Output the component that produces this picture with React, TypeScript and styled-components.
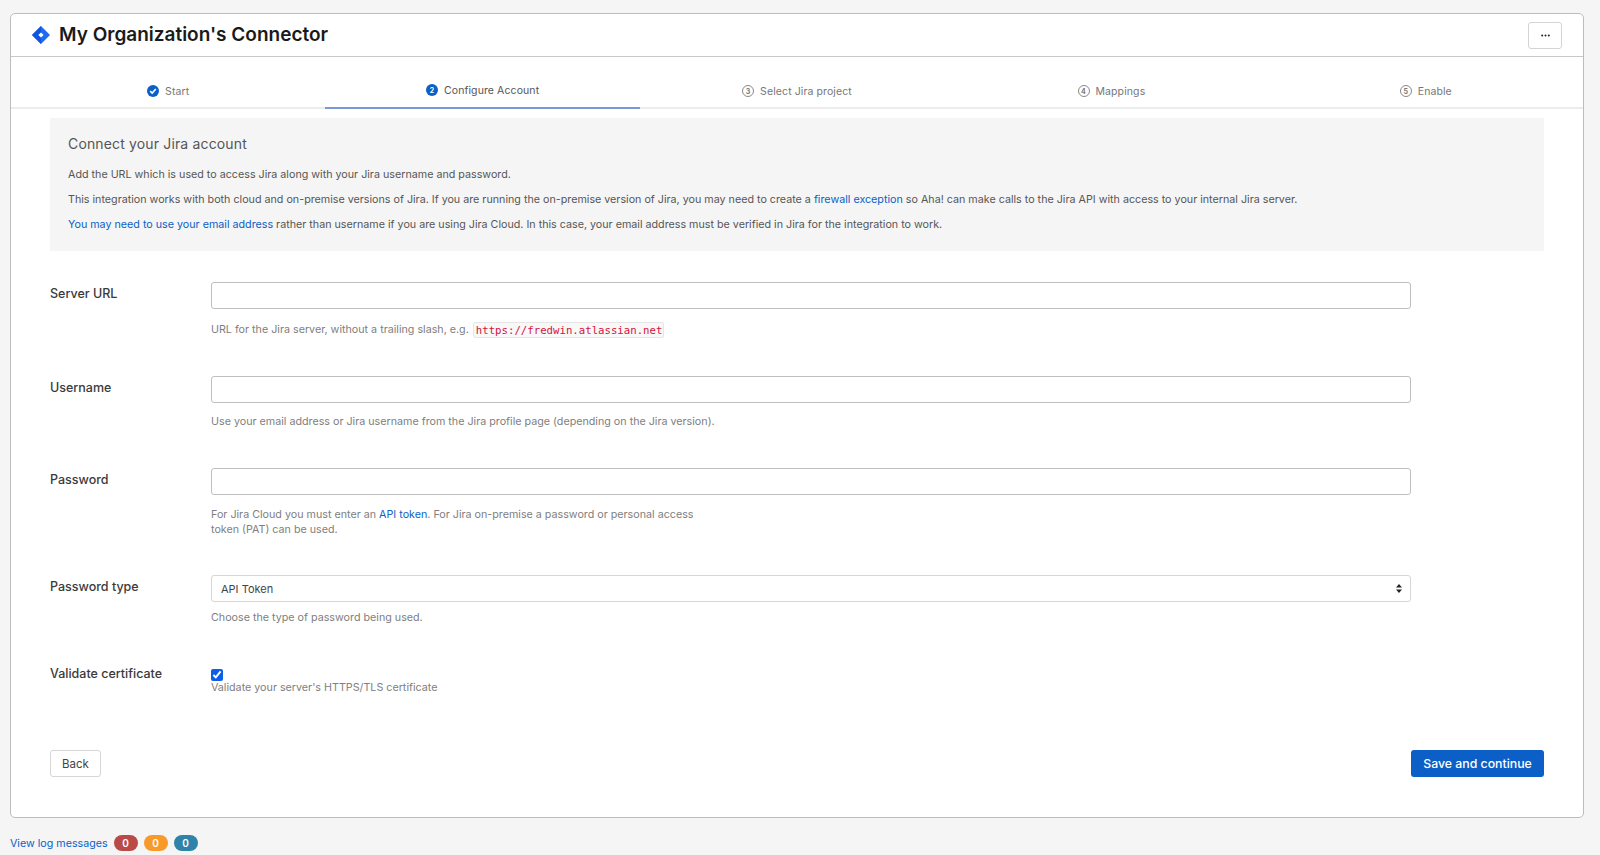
import React from 'react';
import styled, { createGlobalStyle } from 'styled-components';

const Global = createGlobalStyle`
  html, body { margin: 0; padding: 0; height: 855px; overflow: hidden; background: #f5f5f5; }
  body { font-family: Inter, "Liberation Sans", sans-serif; font-size: 11px; color: #555; }
  * { box-sizing: border-box; }
`;

const Page = styled.div`
  height: 855px;
  padding: 13px 16px 0 10px;
  display: flex;
  flex-direction: column;
`;
const Card = styled.main`
  height: 805px;
  background: #fff;
  border: 1px solid #bdbdbd;
  border-radius: 5px;
  display: flex;
  flex-direction: column;
`;
const Header = styled.header`
  height: 43px;
  flex: none;
  border-bottom: 1px solid #c8c8c8;
  padding: 0 21px 0 20px;
  display: flex;
  align-items: center;
  gap: 8px;
`;
const Title = styled.h1`
  margin: 0;
  padding-bottom: 2px;
  flex: 1;
  font-size: 19px;
  font-weight: 600;
  color: #1a1a1a;
  line-height: 1;
`;
const MoreButton = styled.button`
  width: 34px;
  height: 27px;
  background: #fff;
  border: 1px solid #d4d4d4;
  border-radius: 3px;
  padding: 0;
  display: flex;
  align-items: center;
  justify-content: center;
  color: #222;
`;
const Tabs = styled.nav`
  height: 52px;
  flex: none;
  display: grid;
  grid-template-columns: repeat(5, 1fr);
  border-bottom: 2px solid #ececec;
`;
const Tab = styled.div<{ $active?: boolean }>`
  height: 52px;
  padding-top: ${(p) => (p.$active ? 16 : 18)}px;
  display: flex;
  align-items: center;
  justify-content: center;
  gap: 6px;
  font-size: 10.5px;
  letter-spacing: 0.1px;
  color: ${(p) => (p.$active ? '#555' : '#777')};
  border-bottom: 2px solid ${(p) => (p.$active ? '#7b98d6' : 'transparent')};
`;
const StepDot = styled.span<{ $filled?: boolean }>`
  width: 12px;
  height: 12px;
  flex: none;
  border-radius: 50%;
  display: flex;
  align-items: center;
  justify-content: center;
  font-size: 7px;
  font-weight: 700;
  line-height: 1;
  color: ${(p) => (p.$filled ? '#fff' : '#777')};
  background: ${(p) => (p.$filled ? '#0b5fc6' : 'transparent')};
  border: ${(p) => (p.$filled ? 'none' : '1px solid #888')};
`;
const Body = styled.div`
  flex: 1;
  padding: 9px 39px 40px;
  display: flex;
  flex-direction: column;
`;
const InfoPanel = styled.section`
  height: 133px;
  flex: none;
  background: #f5f5f5;
  padding: 17px 18px 0;
  margin-bottom: 31px;
`;
const InfoTitle = styled.h2`
  margin: 0 0 9px;
  font-size: 14px;
  font-weight: 400;
  line-height: 18px;
  letter-spacing: 0.15px;
  color: #555;
`;
const InfoText = styled.p`
  margin: 0;
  height: 25px;
  line-height: 25px;
  font-size: 10.73px;
  color: #555;
  white-space: nowrap;
`;
const Link = styled.a`
  color: #0b5fc6;
  text-decoration: none;
`;
const Row = styled.div<{ $pitch: number }>`
  height: ${(p) => p.$pitch}px;
  flex: none;
  display: grid;
  grid-template-columns: 161px 1200px;
  align-content: start;
`;
const Label = styled.label`
  font-size: 12.5px;
  font-weight: 500;
  color: #3a3a3a;
  line-height: 24px;
`;
const Field = styled.div`
  display: flex;
  flex-direction: column;
  align-items: flex-start;
  position: relative;
`;
const TextInput = styled.input`
  width: 100%;
  height: 27px;
  border: 1px solid #bfbfbf;
  border-radius: 3px;
  background: #fff;
  outline: none;
`;
const SelectBox = styled.select`
  width: 100%;
  height: 27px;
  border: 1px solid #d6d6d6;
  border-radius: 3px;
  background: #fff;
  appearance: none;
  padding: 0 9px;
  font-family: inherit;
  font-size: 11px;
  color: #444;
`;
const SelectArrows = styled.svg`
  position: absolute;
  top: 9px;
  right: 9px;
  width: 6px;
  height: 9px;
  fill: #222;
`;
const Hint = styled.div<{ $top: number }>`
  margin-top: ${(p) => p.$top}px;
  max-width: 490px;
  font-size: 10.73px;
  line-height: 14.5px;
  color: #808080;
  white-space: pre-line;
`;
const WideHint = styled(Hint)`
  max-width: none;
  white-space: nowrap;
`;
const Code = styled.code`
  display: inline-block;
  height: 16px;
  line-height: 15px;
  padding: 0 1px 0 2px;
  margin-left: 1px;
  font-family: "DejaVu Sans Mono", "Liberation Mono", monospace;
  font-size: 10.7px;
  color: #d4143c;
  background: #f8f8f8;
  border: 1px solid #e6e6e6;
  border-radius: 2px;
  vertical-align: middle;
`;
const Check = styled.input`
  width: 12px;
  height: 12px;
  margin: 7px 0 0;
  accent-color: #0d5ee8;
`;
const Actions = styled.div`
  margin-top: auto;
  display: flex;
  justify-content: space-between;
`;
const BackButton = styled.button`
  width: 51px;
  height: 27px;
  background: #fff;
  border: 1px solid #d6d6d6;
  border-radius: 3px;
  font-family: inherit;
  font-size: 11.5px;
  color: #444;
`;
const SaveButton = styled.button`
  width: 133px;
  height: 27px;
  background: #0b5fc6;
  border: none;
  border-radius: 3px;
  font-family: inherit;
  font-size: 12.3px;
  font-weight: 500;
  color: #fff;
`;
const Footer = styled.footer`
  margin-top: 17px;
  display: flex;
  align-items: center;
  height: 16px;
`;
const LogLink = styled(Link)`
  font-size: 10.7px;
  margin-right: 6px;
`;
const Badge = styled.span<{ $color: string }>`
  width: 24px;
  height: 16px;
  margin-right: 6px;
  border-radius: 8px;
  background: ${(p) => p.$color};
  color: #fff;
  font-size: 10px;
  font-weight: 600;
  display: flex;
  align-items: center;
  justify-content: center;
`;

const JiraLogo = () => (
  <svg width="20" height="20" viewBox="0 0 20 20" aria-hidden="true">
    <path d="M10 1 19 10 10 19 1 10Z" fill="#1f6bf0" />
    <path d="M1 10 10 1 10 7 7 10 10 13 10 19Z" fill="#0f55e0" />
    <path d="M10 7.4 12.6 10 10 12.6 7.4 10Z" fill="#fff" />
  </svg>
);
const Dots = () => (
  <svg width="9" height="3" viewBox="0 0 9 3" fill="currentColor" aria-hidden="true">
    <circle cx="1.2" cy="1.5" r="1" />
    <circle cx="4.5" cy="1.5" r="1" />
    <circle cx="7.8" cy="1.5" r="1" />
  </svg>
);
const CheckMark = () => (
  <svg width="8" height="8" viewBox="0 0 8 8" fill="none" stroke="#fff" strokeWidth="1.6" aria-hidden="true">
    <path d="M1.2 4.2 3.2 6 6.8 2" />
  </svg>
);

export default function App() {
  return (
    <Page>
      <Global />
      <Card>
        <Header>
          <JiraLogo />
          <Title>My Organization's Connector</Title>
          <MoreButton aria-label="More"><Dots /></MoreButton>
        </Header>
        <Tabs>
          <Tab><StepDot $filled><CheckMark /></StepDot>Start</Tab>
          <Tab $active><StepDot $filled>2</StepDot>Configure Account</Tab>
          <Tab><StepDot>3</StepDot>Select Jira project</Tab>
          <Tab><StepDot>4</StepDot>Mappings</Tab>
          <Tab><StepDot>5</StepDot>Enable</Tab>
        </Tabs>
        <Body>
          <InfoPanel>
            <InfoTitle>Connect your Jira account</InfoTitle>
            <InfoText>Add the URL which is used to access Jira along with your Jira username and password.</InfoText>
            <InfoText>
              This integration works with both cloud and on-premise versions of Jira. If you are running the on-premise version of Jira, you may need to create a <Link href="#">firewall exception</Link> so Aha! can make calls to the Jira API with access to your internal Jira server.
            </InfoText>
            <InfoText>
              <Link href="#">You may need to use your email address</Link> rather than username if you are using Jira Cloud. In this case, your email address must be verified in Jira for the integration to work.
            </InfoText>
          </InfoPanel>
          <Row $pitch={94}>
            <Label>Server URL</Label>
            <Field>
              <TextInput type="text" />
              <WideHint $top={13}>URL for the Jira server, without a trailing slash, e.g. <Code>https://fredwin.atlassian.net</Code></WideHint>
            </Field>
          </Row>
          <Row $pitch={92}>
            <Label>Username</Label>
            <Field>
              <TextInput type="text" />
              <WideHint $top={12}>Use your email address or Jira username from the Jira profile page (depending on the Jira version).</WideHint>
            </Field>
          </Row>
          <Row $pitch={107}>
            <Label>Password</Label>
            <Field>
              <TextInput type="password" />
              <Hint $top={13}>For Jira Cloud you must enter an <Link href="#">API token</Link>. For Jira on-premise a password or personal access token (PAT) can be used.</Hint>
            </Field>
          </Row>
          <Row $pitch={87}>
            <Label>Password type</Label>
            <Field>
              <SelectBox defaultValue="API Token">
                <option>API Token</option>
              </SelectBox>
              <SelectArrows viewBox="0 0 6 9" aria-hidden="true">
                <path d="M3 0 6 3.5H0ZM3 9 0 5.5H6Z" />
              </SelectArrows>
              <WideHint $top={9}>Choose the type of password being used.</WideHint>
            </Field>
          </Row>
          <Row $pitch={60}>
            <Label>Validate certificate</Label>
            <Field>
              <Check type="checkbox" defaultChecked />
              <WideHint $top={0}>Validate your server's HTTPS/TLS certificate</WideHint>
            </Field>
          </Row>
          <Actions>
            <BackButton>Back</BackButton>
            <SaveButton>Save and continue</SaveButton>
          </Actions>
        </Body>
      </Card>
      <Footer>
        <LogLink href="#">View log messages</LogLink>
        <Badge $color="#b94a48">0</Badge>
        <Badge $color="#f89a2a">0</Badge>
        <Badge $color="#2f83a8">0</Badge>
      </Footer>
    </Page>
  );
}
